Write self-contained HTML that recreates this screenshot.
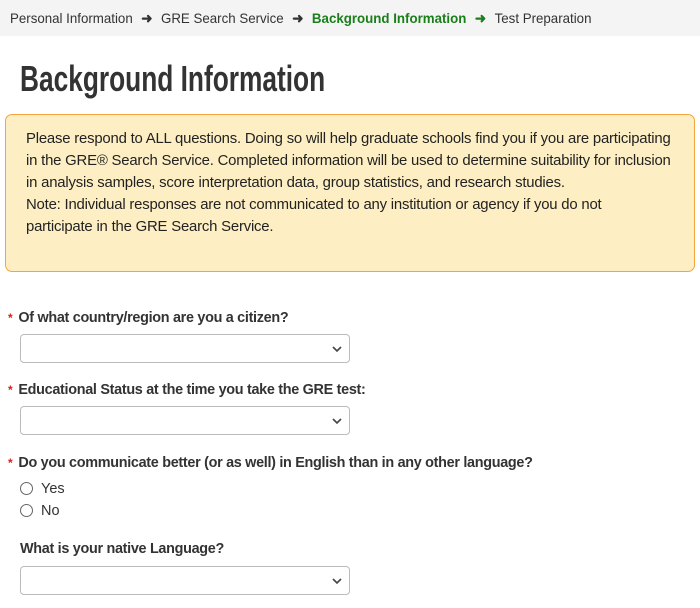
<!DOCTYPE html>
<html><head><meta charset="utf-8"><style>
*{margin:0;padding:0;box-sizing:border-box}
body{width:700px;height:608px;background:#fff;font-family:"Liberation Sans",sans-serif;color:#333;position:relative;overflow:hidden}
.bcw{position:absolute;left:0;top:0;width:700px;height:36px;background:#f4f4f4}
.bc{position:absolute;left:10px;top:0;font-size:14px;line-height:36px;color:#333;white-space:nowrap;transform:scaleX(0.95);transform-origin:left center}
.bc b{color:#1a7f1a}
.bc .ar{display:inline-block;margin:0 9px;font-weight:bold}
.bc .g{color:#1a7f1a}
h1{position:absolute;left:20px;top:58px;font-size:36px;font-weight:bold;color:#333;white-space:nowrap;transform:scaleX(0.73);transform-origin:left center}
.box{position:absolute;left:5px;top:114px;width:690px;height:158px;background:#fdefc3;border:1px solid #f3a43f;border-radius:7px}
.box p{position:absolute;left:20px;top:13px;font-size:14.9px;line-height:22px;color:#222;white-space:nowrap;letter-spacing:-0.2px}
.lbl{position:absolute;left:8px;font-size:14.4px;font-weight:bold;color:#333;white-space:nowrap;letter-spacing:-0.3px}
.lbl i{color:#d32020;font-style:normal;font-size:12px;margin-right:6px}
.sel{position:absolute;left:20px;width:330px;height:29px;border:1px solid #bbb;border-radius:4px;background:#fff}
.sel svg{position:absolute;right:7px;top:11px}
.rad{position:absolute;left:20px;font-size:14.5px;color:#333}
.rad span{display:inline-block;width:13px;height:13px;border:1px solid #666;border-radius:50%;vertical-align:-2px;margin-right:8px}
</style></head><body>
<div class="bcw"><div class="bc">Personal Information<span class="ar">➜</span>GRE Search Service<span class="ar">➜</span><b>Background Information</b><span class="ar g">➜</span>Test Preparation</div></div>
<h1>Background Information</h1>
<div class="box"><p>Please respond to ALL questions. Doing so will help graduate schools find you if you are participating<br>in the GRE® Search Service. Completed information will be used to determine suitability for inclusion<br>in analysis samples, score interpretation data, group statistics, and research studies.<br>Note: Individual responses are not communicated to any institution or agency if you do not<br>participate in the GRE Search Service.</p></div>
<div class="lbl" style="top:310px"><i>*</i>Of what country/region are you a citizen?</div>
<div class="sel" style="top:334px"><svg width="10" height="7"><path d="M1 1l4 4 4-4" stroke="#444" stroke-width="1.6" fill="none"/></svg></div>
<div class="lbl" style="top:382px"><i>*</i>Educational Status at the time you take the GRE test:</div>
<div class="sel" style="top:406px"><svg width="10" height="7"><path d="M1 1l4 4 4-4" stroke="#444" stroke-width="1.6" fill="none"/></svg></div>
<div class="lbl" style="top:455px"><i>*</i>Do you communicate better (or as well) in English than in any other language?</div>
<div class="rad" style="top:481px"><span></span>Yes</div>
<div class="rad" style="top:503px"><span></span>No</div>
<div class="lbl" style="top:541px;left:20px">What is your native Language?</div>
<div class="sel" style="top:566px"><svg width="10" height="7"><path d="M1 1l4 4 4-4" stroke="#444" stroke-width="1.6" fill="none"/></svg></div>
</body></html>
